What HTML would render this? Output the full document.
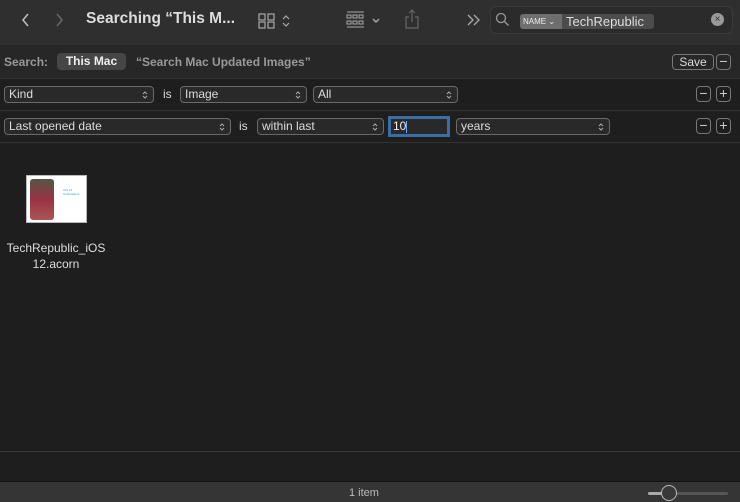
<!DOCTYPE html><html><head><style>
*{margin:0;padding:0;box-sizing:border-box}
body{width:740px;height:502px;background:#1f1e1f;font-family:"Liberation Sans",sans-serif;color:#ddd;position:relative;overflow:hidden}
.a{position:absolute}
.sel{position:absolute;height:17px;border:1px solid #6a6a6a;border-radius:4px;background:#2a292a;font-size:12px;line-height:15px;padding-left:4px;color:#ddd}
.sel svg{position:absolute;right:5px;top:3px}
.btn{position:absolute;width:15px;height:16px;border:1px solid #777;border-radius:4px;color:#ccc;font-size:14px;line-height:13px;text-align:center}
.hl{position:absolute;left:0;width:740px;height:1px;background:#333}
</style></head><body>
<div class="a" style="left:0;top:0;width:740px;height:45px;background:#302f30"></div>
<svg class="a" style="left:20px;top:12px" width="50" height="16"><g fill="none" stroke-width="1.6"><path d="M8 2l-5 6 5 6" stroke="#bbb"/><path d="M37 2l5 6-5 6" stroke="#666"/></g></svg>
<div class="a" style="left:86px;top:10px;font-size:15.5px;font-weight:bold;color:#ddd">Searching “This M...</div>
<svg class="a" style="left:258px;top:12px" width="36" height="18"><g fill="none" stroke="#aaa" stroke-width="1.2"><rect x="1" y="2" width="6" height="6"/><rect x="10" y="2" width="6" height="6"/><rect x="1" y="10" width="6" height="6"/><rect x="10" y="10" width="6" height="6"/><path d="M25 7l3-3 3 3M25 11l3 3 3-3"/></g></svg>
<svg class="a" style="left:346px;top:11px" width="38" height="18"><g fill="none" stroke="#aaa" stroke-width="1"><path d="M1 1h17M1 16h17"/><rect x="1" y="4" width="4" height="3"/><rect x="7" y="4" width="4" height="3"/><rect x="13" y="4" width="4" height="3"/><rect x="1" y="10" width="4" height="3"/><rect x="7" y="10" width="4" height="3"/><rect x="13" y="10" width="4" height="3"/><path d="M27 8l3 3 3-3" stroke-width="1.4"/></g></svg>
<svg class="a" style="left:404px;top:9px" width="16" height="20"><g fill="none" stroke="#666" stroke-width="1.2"><path d="M8 1v12M5 4l3-3 3 3M5 8H2v11h12V8h-3"/></g></svg>
<svg class="a" style="left:466px;top:13px" width="16" height="14"><g fill="none" stroke="#aaa" stroke-width="1.3"><path d="M2 2l5 5-5 5M8 2l5 5-5 5"/></g></svg>
<div class="a" style="left:490px;top:6px;width:243px;height:28px;border:1px solid #3c3b3c;border-radius:6px;background:#2c2b2c"></div>
<svg class="a" style="left:495px;top:12px" width="16" height="16"><g fill="none" stroke="#999" stroke-width="1.3"><circle cx="6" cy="6" r="4.5"/><path d="M9.5 9.5l4 4"/></g></svg>
<div class="a" style="left:520px;top:14px;width:42px;height:15px;background:#6e6e6e;border-radius:3px 0 0 3px;font-size:8px;line-height:15px;padding-left:3px;color:#eee">NAME ⌄</div>
<div class="a" style="left:562px;top:14px;width:92px;height:15px;background:#4d4c4d;border-radius:0 3px 3px 0;font-size:13px;line-height:15px;padding-left:4px;color:#ddd">TechRepublic</div>
<div class="a" style="left:711px;top:13px;width:13px;height:13px;border-radius:50%;background:#999;color:#333;font-size:10px;line-height:13px;text-align:center">×</div>
<div class="a" style="left:0;top:45px;width:740px;height:33px;background:#282728"></div>
<div class="a" style="left:4px;top:55px;font-size:12px;font-weight:bold;color:#999">Search:</div>
<div class="a" style="left:57px;top:53px;width:69px;height:17px;border-radius:4px;background:#474647;font-size:12px;font-weight:bold;line-height:17px;text-align:center;color:#eee">This Mac</div>
<div class="a" style="left:136px;top:55px;font-size:12px;font-weight:bold;color:#999">“Search Mac Updated Images”</div>
<div class="a" style="left:672px;top:54px;width:42px;height:16px;border:1px solid #777;border-radius:4px;font-size:12px;line-height:14px;text-align:center;color:#ddd">Save</div>
<div class="btn" style="left:716px;top:54px">−</div>
<div class="hl" style="top:78px"></div>
<div class="sel" style="left:4px;top:86px;width:150px">Kind<svg width="6" height="10"><path d="M1 4l2-2 2 2M1 6l2 2 2-2" fill="none" stroke="#aaa"/></svg></div>
<div class="a" style="left:163px;top:87px;font-size:12px">is</div>
<div class="sel" style="left:180px;top:86px;width:127px">Image<svg width="6" height="10"><path d="M1 4l2-2 2 2M1 6l2 2 2-2" fill="none" stroke="#aaa"/></svg></div>
<div class="sel" style="left:313px;top:86px;width:145px">All<svg width="6" height="10"><path d="M1 4l2-2 2 2M1 6l2 2 2-2" fill="none" stroke="#aaa"/></svg></div>
<div class="btn" style="left:696px;top:86px">−</div><div class="btn" style="left:716px;top:86px">+</div>
<div class="hl" style="top:110px"></div>
<div class="sel" style="left:4px;top:118px;width:227px">Last opened date<svg width="6" height="10"><path d="M1 4l2-2 2 2M1 6l2 2 2-2" fill="none" stroke="#aaa"/></svg></div>
<div class="a" style="left:239px;top:119px;font-size:12px">is</div>
<div class="sel" style="left:257px;top:118px;width:127px">within last<svg width="6" height="10"><path d="M1 4l2-2 2 2M1 6l2 2 2-2" fill="none" stroke="#aaa"/></svg></div>
<div class="a" style="left:388px;top:116px;width:62px;height:21px;border:3px solid #3a6ea5;background:#2a292a;font-size:12px;line-height:15px;padding-left:2px;color:#eee">10<span style="display:inline-block;width:1px;height:12px;background:#6af;vertical-align:middle"></span></div>
<div class="sel" style="left:456px;top:118px;width:154px">years<svg width="6" height="10"><path d="M1 4l2-2 2 2M1 6l2 2 2-2" fill="none" stroke="#aaa"/></svg></div>
<div class="btn" style="left:696px;top:118px">−</div><div class="btn" style="left:716px;top:118px">+</div>
<div class="hl" style="top:142px"></div>
<div class="a" style="left:26px;top:175px;width:61px;height:48px;background:#fff;border:1px solid #bbb;padding:2px">
<div style="position:absolute;left:3px;top:3px;width:24px;height:41px;background:linear-gradient(#554,#934 50%,#a55);border-radius:3px"></div>
<div style="position:absolute;left:36px;top:12px;font-size:3px;color:#3ab">iOS 12<br>Notifications</div></div>
<div class="a" style="left:0;top:240px;width:112px;text-align:center;font-size:12px;line-height:16px;color:#ddd">TechRepublic_iOS<br>12.acorn</div>
<div class="hl" style="top:451px;background:#3a393a"></div>
<div class="a" style="left:0;top:481px;width:740px;height:21px;background:#363536;border-top:1px solid #111"></div>
<div class="a" style="left:349px;top:487px;font-size:11px;color:#bbb">1 item</div>
<div class="a" style="left:648px;top:492px;width:80px;height:3px;background:#555;border-radius:2px"></div>
<div class="a" style="left:648px;top:492px;width:16px;height:3px;background:#aaa;border-radius:2px"></div>
<div class="a" style="left:661px;top:485px;width:16px;height:16px;border-radius:50%;background:#3a393a;border:1.5px solid #bbb"></div>
</body></html>
